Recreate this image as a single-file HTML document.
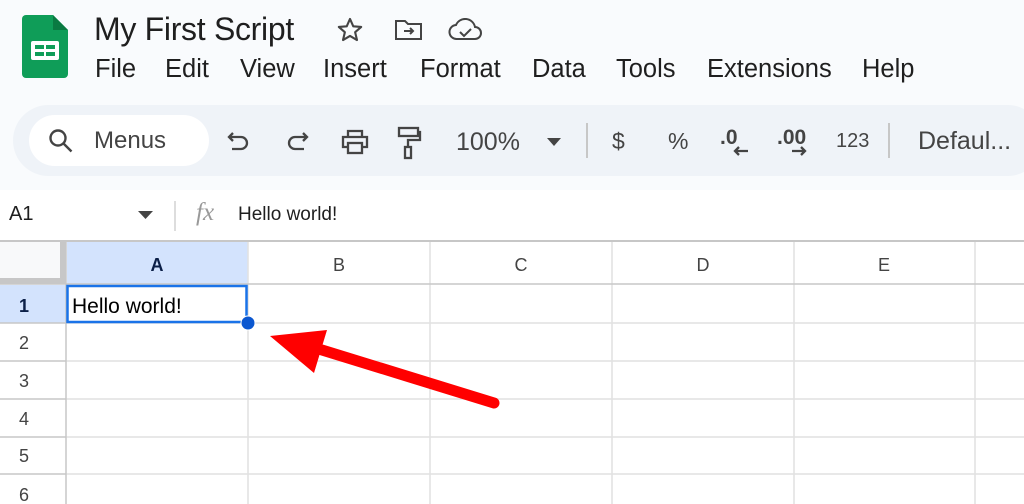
<!DOCTYPE html>
<html><head><meta charset="utf-8"><style>
*{margin:0;padding:0;box-sizing:border-box}
body{width:1024px;height:504px;overflow:hidden;background:#f9fbfd;font-family:"Liberation Sans",Arial,sans-serif;position:relative;color:#1f1f1f}
.a{position:absolute;white-space:nowrap}
</style></head><body>
<svg class="a" style="left:22px;top:15px" width="46" height="63" viewBox="0 0 46 63">
<path d="M4 0H31L46 15V59a4 4 0 0 1-4 4H4a4 4 0 0 1-4-4V4a4 4 0 0 1 4-4z" fill="#0f9d58"/>
<path d="M31 0V15H46z" fill="#0a7a42"/>
<rect x="9" y="26" width="28" height="19" rx="2" fill="#fff"/>
<rect x="13" y="30" width="9" height="4" fill="#0f9d58"/><rect x="24" y="30" width="9" height="4" fill="#0f9d58"/>
<rect x="13" y="37" width="9" height="4" fill="#0f9d58"/><rect x="24" y="37" width="9" height="4" fill="#0f9d58"/>
</svg>
<div class="a" style="left:94px;top:11px;font-size:32px;letter-spacing:-0.3px">My First Script</div>
<svg class="a" style="left:336px;top:16px" width="28" height="28" viewBox="0 0 24 24" fill="none" stroke="#444" stroke-width="1.8" stroke-linejoin="round"><path d="M12 2.5l2.8 6.3 6.8.6-5.2 4.5 1.6 6.7L12 17.1l-6 3.5 1.6-6.7-5.2-4.5 6.8-.6z"/></svg>
<svg class="a" style="left:394px;top:18px" width="30" height="24" viewBox="0 0 30 24" fill="none" stroke="#444" stroke-width="2"><path d="M2 3h9l3 3h13v15H2z"/><path d="M10 13h9M16 10l3 3-3 3"/></svg>
<svg class="a" style="left:448px;top:18px" width="36" height="24" viewBox="0 0 36 24" fill="none" stroke="#444" stroke-width="2"><path d="M9 21a7 7 0 0 1-1-14 10 10 0 0 1 19 2 6 6 0 0 1 0 12z"/><path d="M12 14l4 4 7-7"/></svg>
<div class="a" style="left:95px;top:55px;font-size:25.5px">
<span style="position:absolute;left:0">File</span><span style="position:absolute;left:70px">Edit</span><span style="position:absolute;left:145px">View</span><span style="position:absolute;left:228px">Insert</span><span style="position:absolute;left:325px">Format</span><span style="position:absolute;left:437px">Data</span><span style="position:absolute;left:521px">Tools</span><span style="position:absolute;left:612px">Extensions</span><span style="position:absolute;left:767px">Help</span></div>
<div class="a" style="left:13px;top:105px;width:1030px;height:71px;background:#eff3f8;border-radius:36px"></div>
<div class="a" style="left:29px;top:115px;width:180px;height:51px;background:#fff;border-radius:26px"></div>
<svg class="a" style="left:47px;top:127px" width="28" height="28" viewBox="0 0 28 28" fill="none" stroke="#444" stroke-width="2.4"><circle cx="11" cy="11" r="7.5"/><path d="M16.5 16.5l8 8"/></svg>
<div class="a" style="left:94px;top:127px;font-size:24px;color:#444">Menus</div>
<svg class="a" style="left:226px;top:130px" width="26" height="24" viewBox="0 0 26 24" fill="none" stroke="#444" stroke-width="2.3"><path d="M7 3L3 7l4 4M3 7h12a6 6 0 0 1 0 12H6"/></svg>
<svg class="a" style="left:284px;top:130px" width="26" height="24" viewBox="0 0 26 24" fill="none" stroke="#444" stroke-width="2.3"><path d="M19 3l4 4-4 4M23 7H11a6 6 0 0 0 0 12h9"/></svg>
<svg class="a" style="left:340px;top:128px" width="30" height="28" viewBox="0 0 30 28" fill="none" stroke="#444" stroke-width="2.3"><path d="M8 8V3h14v5M8 19H3V9h24v10h-5"/><rect x="8" y="15" width="14" height="10"/></svg>
<svg class="a" style="left:396px;top:126px" width="26" height="36" viewBox="0 0 26 36" fill="none" stroke="#444" stroke-width="2.3"><rect x="3" y="2" width="19" height="8"/><path d="M22 6h2v8H12v7"/><rect x="9" y="21" width="6" height="11"/></svg>
<div class="a" style="left:456px;top:128px;font-size:25px;color:#444">100%</div>
<svg class="a" style="left:546px;top:137px" width="16" height="10"><path d="M1 1h14L8 9z" fill="#444"/></svg>
<div class="a" style="left:586px;top:123px;width:2px;height:35px;background:#c7c7c7"></div>
<div class="a" style="left:612px;top:128px;font-size:23px;color:#444">$</div>
<div class="a" style="left:668px;top:128px;font-size:23px;color:#444">%</div>
<div class="a" style="left:720px;top:126px;font-size:21px;color:#444;font-weight:bold">.0</div>
<svg class="a" style="left:733px;top:145px" width="16" height="12" viewBox="0 0 16 12" fill="none" stroke="#444" stroke-width="2.3"><path d="M15 6H2M6 2L2 6l4 4"/></svg>
<div class="a" style="left:777px;top:126px;font-size:21px;color:#444;font-weight:bold">.00</div>
<svg class="a" style="left:791px;top:145px" width="16" height="12" viewBox="0 0 16 12" fill="none" stroke="#444" stroke-width="2.3"><path d="M1 6h13M10 2l4 4-4 4"/></svg>
<div class="a" style="left:836px;top:130px;font-size:20px;color:#444">123</div>
<div class="a" style="left:888px;top:123px;width:2px;height:35px;background:#c7c7c7"></div>
<div class="a" style="left:918px;top:127px;font-size:25px;color:#444">Defaul...</div>
<div class="a" style="left:0;top:190px;width:1024px;height:52px;background:#fff;border-bottom:2px solid #c7c7c7"></div>
<div class="a" style="left:9px;top:203px;font-size:20px;color:#1f1f1f">A1</div>
<svg class="a" style="left:138px;top:211px" width="16" height="8"><path d="M0 0h15L7.5 8z" fill="#444"/></svg>
<div class="a" style="left:174px;top:201px;width:2px;height:30px;background:#ddd"></div>
<div class="a" style="left:196px;top:199px;font-size:25px;font-style:italic;color:#999;font-family:'Liberation Serif',serif">fx</div>
<div class="a" style="left:238px;top:204px;font-size:19px">Hello world!</div>
<svg class="a" style="left:0;top:242px" width="1024" height="262">
<rect x="0" y="0" width="1024" height="262" fill="#fff"/>
<rect x="0" y="0" width="60" height="36" fill="#f8f9fa"/>
<rect x="60" y="0" width="6" height="42" fill="#c7c7c7"/>
<rect x="0" y="36" width="66" height="6" fill="#c7c7c7"/>
<rect x="67" y="0" width="181" height="42" fill="#d3e3fd"/>
<rect x="0" y="43" width="66" height="38" fill="#d3e3fd"/>
<g stroke="#e1e1e1" stroke-width="1.5">
<path d="M248 0V262M430 0V262M612 0V262M794 0V262M975 0V262"/>
<path d="M66 81H1024M66 119H1024M66 157H1024M66 195H1024M66 232H1024"/>
</g>
<g stroke="#c7c7c7" stroke-width="1.5"><path d="M66 0V262M0 42H1024M0 81H66M0 119H66M0 157H66M0 195H66M0 232H66"/></g>
<g font-family="Liberation Sans,Arial,sans-serif" font-size="18" text-anchor="middle" fill="#444">
<text x="157" y="29" fill="#0b1f47" font-weight="bold">A</text><text x="339" y="29">B</text><text x="521" y="29">C</text><text x="703" y="29">D</text><text x="884" y="29">E</text>
<text x="24" y="70" fill="#0b1f47" font-weight="bold">1</text><text x="24" y="107">2</text><text x="24" y="145">3</text><text x="24" y="183">4</text><text x="24" y="220">5</text><text x="24" y="259">6</text>
</g>
<rect x="67.5" y="44" width="179" height="36" fill="none" stroke="#1a73e8" stroke-width="2.5"/>
<text x="72" y="71" font-family="Liberation Sans,Arial,sans-serif" font-size="21" fill="#000">Hello world!</text>
<circle cx="248" cy="81" r="7" fill="#0b57d0" stroke="#fff" stroke-width="1"/>
<path d="M322 108L494 161" stroke="#f00" stroke-width="11" stroke-linecap="round"/>
<path d="M270 94L327 88L314 131z" fill="#f00"/>
</svg>
</body></html>
